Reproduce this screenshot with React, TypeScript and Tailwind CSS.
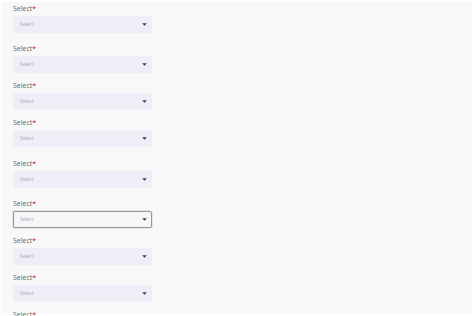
const rows = [
  { top: 0, focused: false },
  { top: 11, focused: false },
  { top: 8, focused: false },
  { top: 8, focused: false },
  { top: 12, focused: false },
  { top: 11, focused: true },
  { top: 8, focused: false },
  { top: 8, focused: false },
  { top: 8, focused: false },
]

function Chevron() {
  return (
    <svg width="5" height="3" viewBox="0 0 5 3" className="text-[#3a3a3a]">
      <path d="M0.3 0.3 L2.5 2.7 L4.7 0.3 Z" fill="currentColor" />
    </svg>
  )
}

function Field({ focused, mt }: { focused: boolean; mt: number }) {
  return (
    <div style={{ marginTop: mt }} className="w-[139px]">
      <div className="text-[7px] leading-[9px] text-[#666]">
        Select<span className="text-[#d0021b]">*</span>
      </div>
      <div
        className={
          focused
            ? "mt-[3px] h-[17px] flex items-center justify-between pl-[6px] pr-[4px] rounded-[2px] border border-[#8f9a9a] bg-[#f6f6f8] shadow-[0_0_0_1px_rgba(200,210,210,0.5)]"
            : "mt-[3px] h-[17px] flex items-center justify-between pl-[7px] pr-[5px] rounded-[2px] bg-[#eeeef7]"
        }
      >
        <span className="text-[5px] text-[#a8a8b4]">Select</span>
        <Chevron />
      </div>
    </div>
  )
}

export default function App() {
  return (
    <div
      className="w-[474px] h-[316px] overflow-hidden bg-white pt-[2px] px-[2px]"
      style={{ fontFamily: '"Open Sans", sans-serif' }}
    >
      <div className="h-[311px] bg-[#f8f8f8] pl-[11px] pt-[2px]">
        {rows.map((r, i) => (
          <Field key={i} focused={r.focused} mt={r.top} />
        ))}
      </div>
    </div>
  )
}
